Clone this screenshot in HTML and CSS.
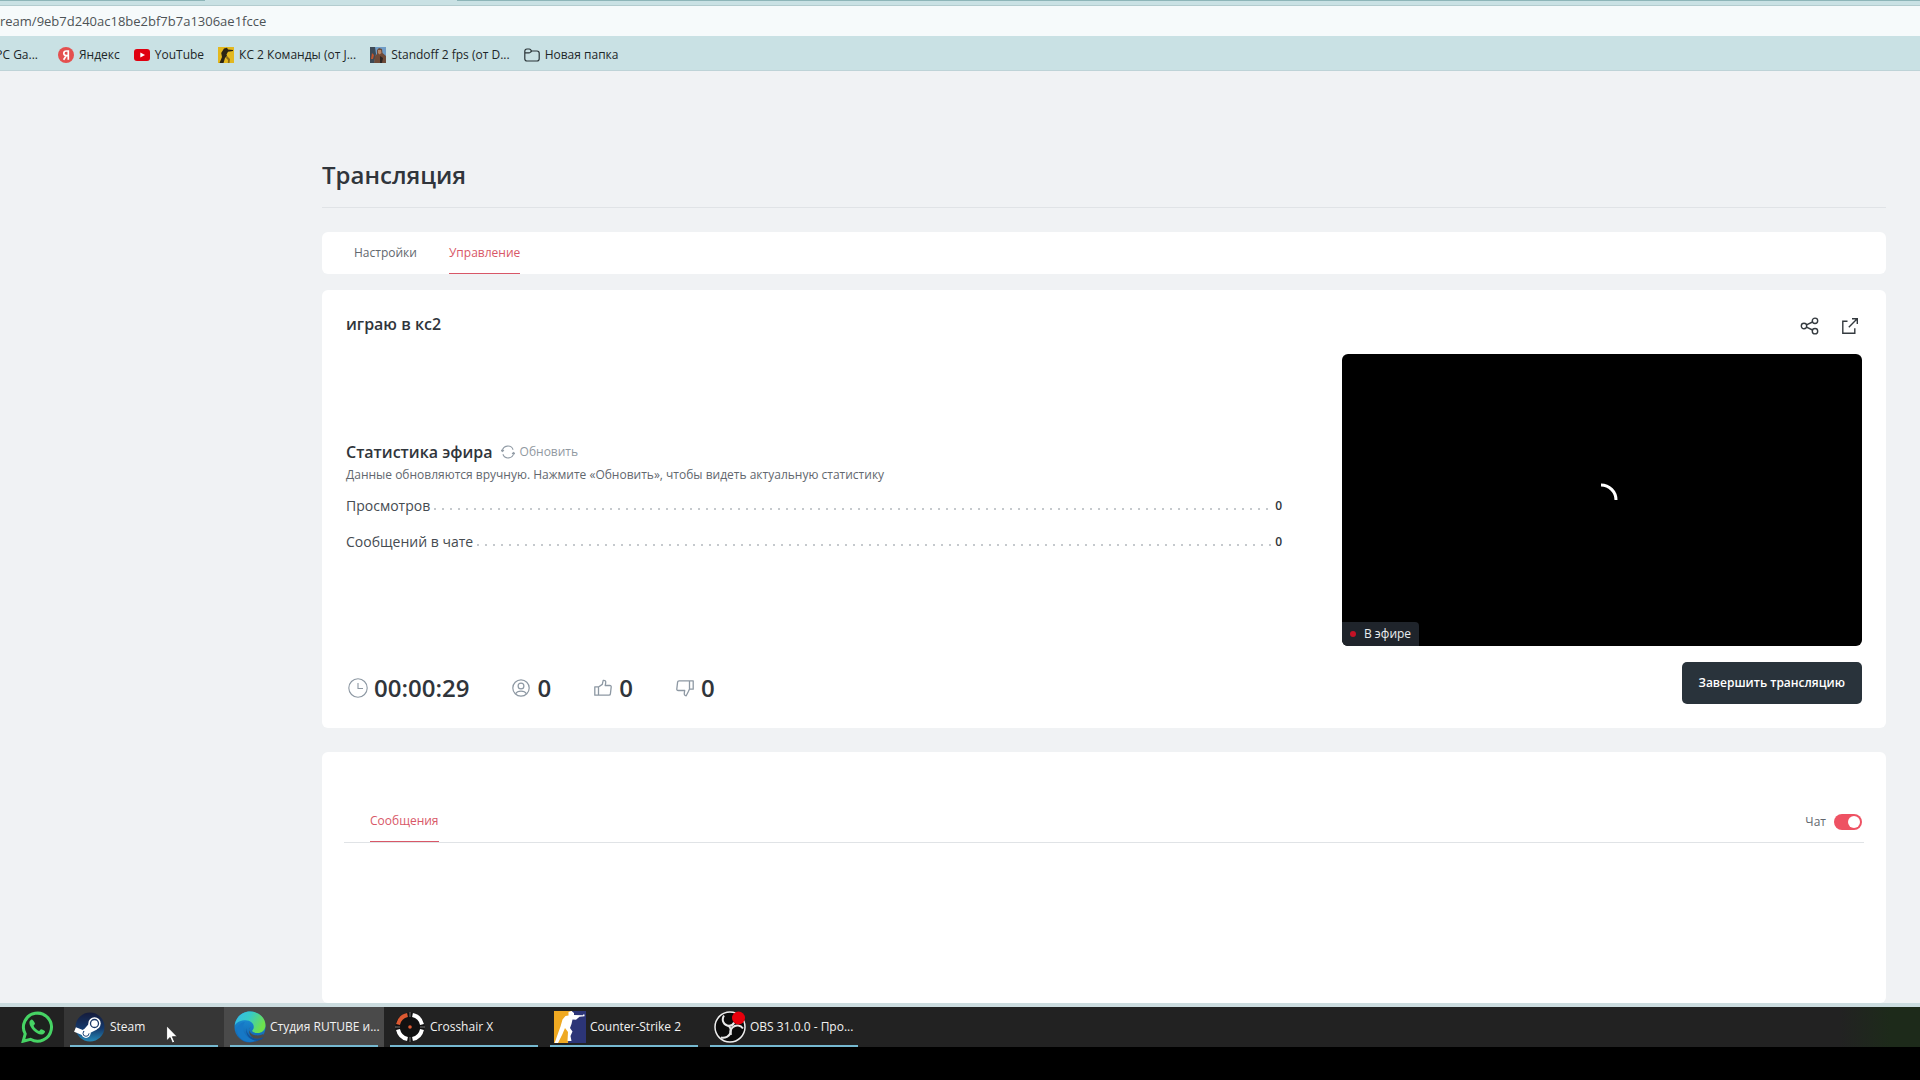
FILE: index.html
```html
<!DOCTYPE html>
<html lang="ru">
<head>
<meta charset="utf-8">
<title>Студия RUTUBE</title>
<link rel="stylesheet" href="styles.css">
</head>
<body>
<header class="browser">
  <div class="tabstrip"><span class="tab-rest tab-left"></span><span class="tab-active"></span><span class="tab-rest tab-fill"></span></div>
  <input class="address" type="text" aria-label="Адрес" value="ream/9eb7d240ac18be2bf7b7a1306ae1fcce">
  <nav class="bookmarks">
    <a class="bookmark bookmark-first" href="#">PC Ga...</a>
    <a class="bookmark" href="#">
      <svg class="icon16" viewBox="0 0 16 16"><circle cx="8" cy="8" r="8" fill="#e4504f"/><path d="M10.3 3.2v9.6M10.3 4H8.4C5 4 5 8.6 8.2 8.6h2.1M8.300 8.600L5.600 12.800" fill="none" stroke="#fff" stroke-width="1.700"/></svg>
      Яндекс</a>
    <a class="bookmark" href="#">
      <svg class="icon16" viewBox="0 0 16 16"><rect y="2" width="16" height="12" rx="3" fill="#e0000f"/><path d="M6.300 5.400v5.200L11 8z" fill="#fff"/></svg>
      YouTube</a>
    <a class="bookmark" href="#">
      <svg class="icon16" viewBox="0 0 16 16"><rect width="16" height="16" fill="#e3b81f"/><path d="M6 1.500l3-.8 1 1.800 5 .4v1l-5 .8-1.500 2.800L9 9l-2 2-1.500 5H1.500L4 10l-.8-4z" fill="#2b2415"/><path d="M9 9l3 3-.5 4H9.800l.2-3-2-2z" fill="#8a6a18"/></svg>
      КС 2 Команды (от J...</a>
    <a class="bookmark" href="#">
      <svg class="icon16" viewBox="0 0 16 16"><rect width="16" height="16" fill="#6f9cc6"/><path d="M0 0h5l1 7-2 9H0z" fill="#3d4a56"/><path d="M4 16l1-7 2-2V3l2-2 3 1 .5 4L16 9v7z" fill="#6e4a38"/><path d="M8 3h3l.5 3-2 1.500L8 6z" fill="#b98565"/><path d="M10 9l3 2-1 5h-2z" fill="#2b2523"/><path d="M2 6l2 2-1 4H1z" fill="#c0552e"/></svg>
      Standoff 2 fps (от D...</a>
    <a class="bookmark" href="#">
      <svg class="icon16" viewBox="0 0 16 16" fill="none" stroke="#2b3538" stroke-width="1.200"><path d="M.8 4.300C.8 2.800 1.600 2 3 2h2.200c.7 0 1.100.3 1.500.8l.9 1.200H13c1.400 0 2.200.8 2.200 2.200v5.600c0 1.400-.8 2.200-2.200 2.200H3c-1.400 0-2.200-.8-2.200-2.200zM.8 5.800h4.400c.7 0 1.100-.3 1.500-.8l.9-1"/></svg>
      Новая папка</a>
  </nav>
</header>

<main class="page">
  <h1 class="page-title">Трансляция</h1>
  <nav class="tabs card">
    <a class="tab" href="#">Настройки</a>
    <a class="tab tab-current" href="#">Управление</a>
  </nav>

  <section class="stream card">
    <div class="stream-head">
      <h2 class="stream-name">играю в кс2</h2>
      <div class="stream-tools">
        <button class="icon-button" type="button" aria-label="Поделиться">
          <svg class="icon20" viewBox="0 0 20 20" fill="none" stroke="#343a3f" stroke-width="1.400"><circle cx="4" cy="10" r="2.700"/><circle cx="15" cy="4.800" r="2.700"/><circle cx="15" cy="15.200" r="2.700"/><path d="M6.500 8.800l6-2.800M6.500 11.200l6 2.800"/></svg>
        </button>
        <button class="icon-button" type="button" aria-label="Открыть">
          <svg class="icon20" viewBox="0 0 20 20" fill="none" stroke="#343a3f" stroke-width="1.400"><path d="M7.500 5.200H2.800v12h12v-4.900M8.800 11.200L17.200 2.800M12 2.700h5.300V8"/></svg>
        </button>
      </div>
    </div>
    <div class="stream-body">
      <div class="stats">
        <div class="stats-head">
          <h3 class="stats-title">Статистика эфира</h3>
          <button class="refresh" type="button">
            <svg class="icon14" viewBox="0 0 14 14" fill="none" stroke="#929ca6" stroke-width="1.100"><path d="M1.300 6A5.600 5.600 0 0 1 12.100 4.700M12.700 8A5.600 5.600 0 0 1 1.900 9.300M0 4.800l1.300 1.600 1.700-1.100M14 9.200l-1.300-1.600-1.700 1.100"/></svg>
            Обновить</button>
        </div>
        <p class="stats-note">Данные обновляются вручную. Нажмите «Обновить», чтобы видеть актуальную статистику</p>
        <dl class="stat"><dt>Просмотров</dt><dd class="leader"></dd><dd class="stat-value">0</dd></dl>
        <dl class="stat"><dt>Сообщений в чате</dt><dd class="leader"></dd><dd class="stat-value">0</dd></dl>
      </div>
      <div class="video">
        <svg class="spinner" viewBox="0 0 36 36"><path d="M17 3a15 15 0 0 1 15 15" fill="none" stroke="#fff" stroke-width="3"/></svg>
        <span class="live">В эфире</span>
      </div>
    </div>
    <div class="stream-foot">
      <ul class="counters">
        <li class="counter counter-time">
          <svg class="icon20" viewBox="0 0 20 20" fill="none" stroke="#8d98a3" stroke-width="1.100"><circle cx="10" cy="10" r="9.200"/><path d="M10 5v5.500h5"/></svg>
          00:00:29</li>
        <li class="counter">
          <svg class="icon18" viewBox="0 0 18 18" fill="none" stroke="#8d98a3" stroke-width="1.200"><circle cx="9" cy="9" r="8.200"/><circle cx="9" cy="7" r="2.900"/><path d="M3.600 14.800c1-1.900 2.300-2.600 5.400-2.600s4.400.7 5.400 2.600"/></svg>
          0</li>
        <li class="counter">
          <svg class="icon18" viewBox="0 0 18 18" fill="none" stroke="#8d98a3" stroke-width="1.300" stroke-linejoin="round"><path d="M.8 7.800h3.700v8.400H.8zM4.500 8l3.800-2.600.9-4C10.800 1 12 2 11.700 3.800l-.5 2.700h4.600c1 0 1.500.6 1.400 1.500l-.8 6.900c-.1.900-.6 1.300-1.500 1.300H4.500"/></svg>
          0</li>
        <li class="counter">
          <svg class="icon18" viewBox="0 0 18 18" fill="none" stroke="#8d98a3" stroke-width="1.300" stroke-linejoin="round"><path d="M17.200 1.800h-3.700v8.400h3.700zM13.500 10l-1 2.300-2.300 4.500c-1.600-.2-2.100-1.200-1.900-2.700l.4-2.600H2.200c-1 0-1.500-.6-1.400-1.500l.8-6.900c.1-.9.600-1.300 1.500-1.300h10.400"/></svg>
          0</li>
      </ul>
      <button class="finish" type="button">Завершить трансляцию</button>
    </div>
  </section>

  <section class="chat card">
    <div class="chat-head">
      <a class="tab tab-current chat-tab" href="#">Сообщения</a>
      <label class="switch-label">Чат <input class="switch" type="checkbox" checked></label>
    </div>
  </section>
</main>

<footer class="taskbar">
  <button class="task task-pinned" type="button" aria-label="WhatsApp">
    <svg class="icon32" viewBox="0 0 32 32"><path d="M2.200 30.200l2-7.300A14 14 0 1 1 9.500 28.300z" fill="#1d211e" stroke="#46d364" stroke-width="3"/><path d="M11 8.500c-.6-.3-2.800 1-2.600 3.400.5 5 6.600 11 11.800 11.600 2.400.2 4.100-1.800 3.800-3.200-.2-.7-3.100-2-3.900-2.100-.8 0-1.300 1.600-2 1.700-1.600 0-5.400-3.700-5.500-5.100 0-.7 1.400-1.300 1.400-2.100 0-.9-1.800-3.800-3-4.200z" fill="#46d364"/></svg>
  </button>
  <button class="task task-hover" type="button">
    <svg class="icon32" viewBox="0 0 32 32"><defs><linearGradient id="steam" x2="0" y2="1"><stop offset="0" stop-color="#151b3b"/><stop offset=".55" stop-color="#15396b"/><stop offset="1" stop-color="#2589b8"/></linearGradient></defs><circle cx="16" cy="16" r="14.500" fill="url(#steam)"/><path d="M1 18.500l9.500 3.800 5.800-4.700" stroke="#fff" stroke-width="5" fill="none"/><circle cx="12" cy="22.300" r="4.600" fill="#fff"/><circle cx="12" cy="22.300" r="3" fill="none" stroke="#1d4577" stroke-width="1"/><path d="M9 19.500l7-8 7 7-8 4z" fill="#fff"/><circle cx="20.500" cy="12.500" r="6.200" fill="#fff"/><circle cx="20.500" cy="12.500" r="4" fill="#fff" stroke="#1b3867" stroke-width="1.300"/></svg>
    <span>Steam</span>
  </button>
  <button class="task task-open" type="button">
    <svg class="icon32" viewBox="0 0 32 32"><defs><linearGradient id="edgeTop" x1="0" x2="1" y2=".4"><stop offset="0" stop-color="#35b8ee"/><stop offset=".5" stop-color="#37cbc6"/><stop offset="1" stop-color="#6ee04c"/></linearGradient><linearGradient id="edgeLow" x2="0" y2="1"><stop offset="0" stop-color="#1c96dc"/><stop offset="1" stop-color="#1260ad"/></linearGradient></defs><circle cx="16" cy="16" r="15.500" fill="url(#edgeLow)"/><path d="M.7 14.500C1.800 6 8.200.5 16 .5c9 0 15.500 6.500 15.500 13.700 0 5-3.800 7.800-8 7.800-3.500 0-5.300-1.300-5.300-2.300 0-.8 1.600-1.300 1.600-3.800 0-3.600-3.500-6.600-8.200-6.600C7 9.300 2.800 11.200.7 14.500z" fill="url(#edgeTop)"/><path d="M11 11c-2.500 3-2.800 8 .2 12.300 2.400 3.400 6.600 5.700 11 6.200C13 34 3 28 3 19c0-4.500 4-7.500 8-8z" fill="#1678c6"/><path d="M12.500 17c-.6 6 5 10.500 10.500 10.500 3.300 0 5.500-1.200 6.600-1.800l-1.700 2.600c-8.500 4.500-17.400-3-15.400-11.300z" fill="#11509a"/><path d="M16.500 16c-2.500 3-.5 7.500 5 8.300 3.500.5 6-.3 8-1.500L28.800 26c-8 5-17-2-12.300-10z" fill="#4b4b4b"/></svg>
    <span>Студия RUTUBE и...</span>
  </button>
  <button class="task" type="button">
    <svg class="icon32" viewBox="0 0 32 32"><circle cx="16" cy="16" r="14.500" fill="#111"/><g fill="none" stroke-width="4"><path d="M18.500 4a12.300 12.300 0 0 1 9.500 9.500M28 18.500a12.300 12.300 0 0 1-9.500 9.500M13.500 28A12.300 12.300 0 0 1 4 18.500" stroke="#fff"/><path d="M4 13.500A12.300 12.300 0 0 1 13.500 4" stroke="#dc5a32"/></g><circle cx="16" cy="16" r="1.800" fill="#dc5a32"/><path d="M16 1v5M16 26v5M1 16h5M26 16h5" stroke="#777" stroke-width="1"/></svg>
    <span>Crosshair X</span>
  </button>
  <button class="task" type="button">
    <svg class="icon32" viewBox="0 0 32 32"><path d="M0 0h18v32H0z" fill="#efa922"/><path d="M18 0h14v32H14z" fill="#2c3577"/><path d="M14.500 1l3-1 2.500 2v2l9 .2V3.500h1.500v1.700l-5 .6-3.500 3-3.500-.2-1 4.500-1.500 3.900 2.500 3.500-2 4.500 1 5h-4l.5-9-3-4-2.500 6L4 32H.5l1-2.500 3-8.500 2-5.500 2-7 3-3.500 3-.5z" fill="#fff"/></svg>
    <span>Counter-Strike 2</span>
  </button>
  <button class="task" type="button">
    <svg class="icon32" viewBox="0 0 32 32"><circle cx="16" cy="16" r="15" fill="#0b0b0b" stroke="#eee" stroke-width="1.500"/><g fill="none" stroke="#e8e8e8" stroke-width="2"><path d="M10 4.500c-2.500 4-1 8.800 3.200 10 3 .8 5.800-.5 7-3"/><path d="M29 17.500c-2.400-3.300-7-4.200-10.300-1.300-2.200 2-2.700 5-1.500 7.600"/><path d="M7 26.500c4.200.8 8.500-1 9.600-5.200.7-3-.5-5.400-2.800-6.800"/></g><circle cx="24.500" cy="7" r="6.500" fill="#e8000c"/></svg>
    <span>OBS 31.0.0 - Про...</span>
  </button>
</footer>
<svg class="cursor" viewBox="0 0 12 19"><path d="M.6.800v15l3.500-3.300 2.300 5.500 2.300-1-2.300-5.300h4.900z" fill="#fff" stroke="#222" stroke-width=".8"/></svg>
</body>
</html>
```

FILE: styles.css
```css
* { box-sizing: border-box; }

body {
  margin: 0;
  height: 100vh;
  display: flex;
  flex-direction: column;
  overflow: hidden;
  background: #000;
  font-family: "Open Sans", "Noto Sans", sans-serif;
  font-size: 12px;
  line-height: 18px;
  color: #62676e;
}

h1, h2, h3, p, dl, dd, ul { margin: 0; padding: 0; }
button { font: inherit; color: inherit; border: 0; background: none; padding: 0; }
a { color: inherit; text-decoration: none; }
svg { display: block; flex: none; }

.icon14 { width: 14px; height: 14px; }
.icon16 { width: 16px; height: 16px; }
.icon18 { width: 18px; height: 18px; }
.icon20 { width: 20px; height: 20px; }
.icon32 { width: 32px; height: 32px; }

/* Browser chrome */
.browser { flex: none; background: #c9e1e4; border-bottom: 1px solid #bed3d7; }
.tabstrip { display: flex; height: 6px; border-bottom: 1px solid #b3cccf; }
.tab-rest { height: 1px; background: #8db5b8; }
.tab-left { width: 205px; }
.tab-active { width: 252px; }
.tab-fill { flex: 1; }
.address {
  display: block;
  width: 100%;
  height: 30px;
  padding: 0;
  border: 0;
  background: #f6fafb;
  font: 13px "Open Sans", sans-serif;
  color: #4d5356;
}
.bookmarks {
  display: flex;
  gap: 14px;
  height: 34px;
  padding-top: 3px;
  align-items: center;
  color: #1d2628;
  white-space: nowrap;
}
.bookmark { display: flex; align-items: center; gap: 5px; }
.bookmark-first { width: 44px; justify-content: flex-end; padding-right: 6px; }

/* Studio page */
.page {
  flex: 1;
  min-height: 0;
  overflow: hidden;
  display: flex;
  flex-direction: column;
  padding: 88px 34px 0 322px;
  background: #f0f2f4;
  border-bottom: 4px solid #cbdcdf;
}
.card { background: #fff; border-radius: 6px; }
.page-title {
  flex: none;
  padding-bottom: 16px;
  border-bottom: 1px solid #e0e3e6;
  font-size: 24px;
  line-height: 32px;
  font-weight: 600;
  color: #30353b;
}
.tabs {
  flex: none;
  display: flex;
  gap: 32px;
  margin-top: 24px;
  padding: 0 32px;
}
.tab {
  padding: 12px 0 11px;
  border-bottom: 1px solid transparent;
}
.tab-current { color: #d85767; border-color: #d85767; }

.stream { flex: none; margin-top: 16px; padding: 24px; }
.stream-head { display: flex; justify-content: space-between; height: 40px; }
.stream-name { font-size: 16px; line-height: 20px; font-weight: 600; color: #30353b; }
.stream-tools { display: flex; align-items: flex-start; gap: 20px; padding: 2px 2px 0 0; }
.stream-body { display: flex; gap: 60px; align-items: center; }
.stats { flex: 1; min-width: 0; }
.stats-head { display: flex; align-items: center; gap: 8px; }
.stats-title { font-size: 16px; line-height: 24px; font-weight: 600; color: #30353b; }
.refresh { display: flex; align-items: center; gap: 5px; color: #9199a1; }
.stats-note { margin-bottom: 2px; line-height: 22px; }
.stat { display: flex; align-items: center; height: 36px; font-size: 14px; color: #454b51; }
.leader {
  flex: 1;
  height: 2px;
  margin: 6px 3px 0 4px;
  background: linear-gradient(90deg, #c5c9cd 2px, transparent 2px) 0 0 / 8px 2px;
}
.stat-value { font-size: 12px; font-weight: 600; color: #30353b; }

.video {
  position: relative;
  width: 520px;
  aspect-ratio: 520 / 292;
  display: grid;
  place-items: center;
  overflow: hidden;
  border-radius: 6px;
  background: #000;
}
.spinner { width: 36px; height: 36px; }
.live {
  position: absolute;
  left: 0;
  bottom: 0;
  display: flex;
  align-items: center;
  gap: 8px;
  height: 24px;
  padding: 0 8px;
  border-top-right-radius: 4px;
  background: #1f242b;
  color: #e9ecef;
}
.live::before { content: ""; width: 6px; height: 6px; border-radius: 3px; background: #c41226; }

.stream-foot { display: flex; justify-content: space-between; align-items: flex-start; margin-top: 16px; }
.counters {
  display: flex;
  gap: 43px;
  padding: 10px 0 0 2px;
  list-style: none;
  font-size: 24px;
  line-height: 32px;
  font-weight: 600;
  color: #30353b;
}
.counter { display: flex; align-items: center; gap: 7px; }
.counter-time { gap: 6px; }
.finish {
  height: 42px;
  padding: 0 17px;
  border-radius: 5px;
  background: #29333b;
  color: #fff;
  font-weight: 600;
}

.chat { flex: 1; margin-top: 24px; padding: 48px 22px 0; }
.chat-head {
  display: flex;
  justify-content: space-between;
  align-items: center;
  padding: 0 2px 0 26px;
  border-bottom: 1px solid #e0e3e6;
}
.switch-label { display: flex; align-items: center; gap: 8px; padding-top: 2px; }
.switch {
  appearance: none;
  display: flex;
  width: 28px;
  height: 16px;
  margin: 0;
  padding: 2px;
  border-radius: 8px;
  background: #ee5263;
}
.switch::before { content: ""; width: 12px; height: 12px; border-radius: 6px; background: #fff; }
.switch:checked { justify-content: flex-end; }

/* Desktop taskbar, above the empty band at the bottom of the screen */
.taskbar {
  flex: none;
  display: flex;
  height: 40px;
  margin-bottom: 33px;
  padding-left: 11px;
  background: linear-gradient(90deg, #222 calc(100% - 80px), #1d2a1a calc(100% - 30px));
  color: #f2f2f2;
}
.task {
  display: flex;
  align-items: center;
  gap: 4px;
  width: 160px;
  padding: 0 10px;
  white-space: nowrap;
  background: linear-gradient(#76b9d1, #76b9d1) center bottom / 148px 2px no-repeat;
}
.task-pinned { width: 53px; background: none; }
.task-hover { background-color: #363636; }
.task-open { background-color: #4a4a4a; }

.cursor { position: absolute; left: 166px; top: 1025px; width: 12px; height: 19px; }
```
